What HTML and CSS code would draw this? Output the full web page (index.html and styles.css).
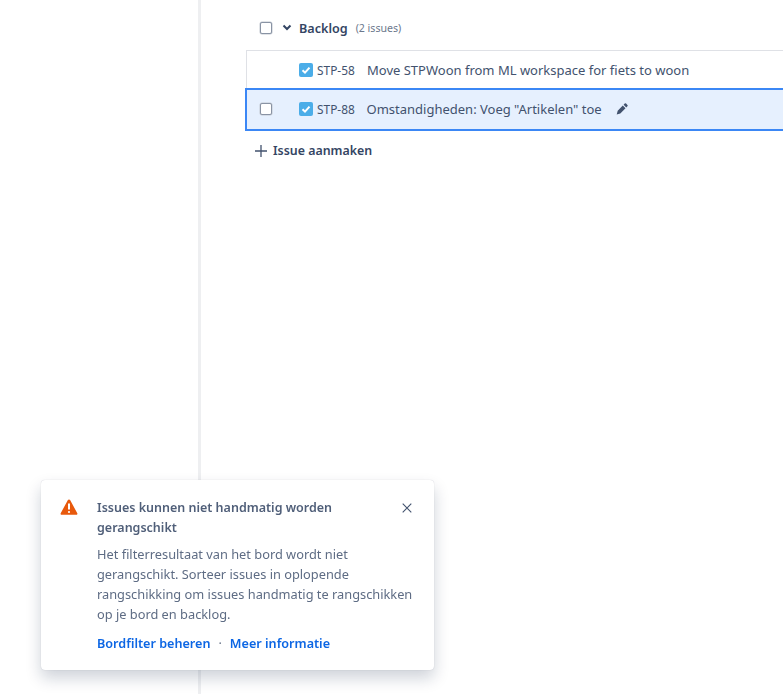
FILE: index.html
```html
<!DOCTYPE html>
<html lang="nl">
<head>
<meta charset="utf-8">
<title>Backlog</title>
<link rel="stylesheet" href="styles.css">
</head>
<body>
<div class="page">
  <aside class="side"></aside>
  <main class="main">
    <header class="head">
      <span class="check"></span>
      <svg class="chev" width="10" height="8" viewBox="0 0 10 8"><path d="M1.5 1.5 5 5l3.5-3.5" fill="none" stroke="#344563" stroke-width="2"/></svg>
      <span class="title">Backlog</span>
      <span class="count">(2 issues)</span>
    </header>
    <div class="list">
      <div class="row">
        <span class="slot"></span>
        <svg class="type" width="14" height="14" viewBox="0 0 14 14"><rect width="14" height="14" rx="2" fill="#4bade8"/><path d="M3.5 7.2 6 9.6l4.5-5" fill="none" stroke="#fff" stroke-width="2"/></svg>
        <span class="key">STP-58</span>
        <span class="summary">Move STPWoon from ML workspace for fiets to woon</span>
      </div>
      <div class="row selected">
        <span class="slot"><span class="check"></span></span>
        <svg class="type" width="14" height="14" viewBox="0 0 14 14"><rect width="14" height="14" rx="2" fill="#4bade8"/><path d="M3.5 7.2 6 9.6l4.5-5" fill="none" stroke="#fff" stroke-width="2"/></svg>
        <span class="key">STP-88</span>
        <span class="summary">Omstandigheden: Voeg "Artikelen" toe</span>
        <svg class="pencil" width="12" height="12" viewBox="0 0 12 12"><path d="M8.7.6a1 1 0 0 1 1.4 0l1.3 1.3a1 1 0 0 1 0 1.4l-1.1 1.1-2.7-2.7zM6.8 2.5l2.7 2.7-5.2 5.2-3.6 1 1-3.7z" fill="#42526e"/></svg>
      </div>
    </div>
    <div class="create">
      <svg width="14" height="14" viewBox="0 0 14 14"><path d="M7 1v12M1 7h12" stroke="#42526e" stroke-width="1.3"/></svg>
      <span>Issue aanmaken</span>
    </div>
  </main>
</div>
<section class="flag">
  <svg class="warn" width="18" height="16" viewBox="0 0 18 16"><path d="M7.9 1.1a1.2 1.2 0 0 1 2.2 0l7.2 13.1c.4.8 0 1.5-.9 1.5H1.6c-.9 0-1.3-.7-.9-1.5z" fill="#e8590c"/><path d="M9 4.5v6" stroke="#fff" stroke-width="2"/><circle cx="9" cy="13" r="1.1" fill="#fff"/></svg>
  <div class="flag-body">
    <h2 class="flag-title">Issues kunnen niet handmatig worden gerangschikt</h2>
    <p class="flag-text">Het filterresultaat van het bord wordt niet gerangschikt. Sorteer issues in oplopende rangschikking om issues handmatig te rangschikken op je bord en backlog.</p>
    <div class="flag-links"><a href="#">Bordfilter beheren</a><span class="dot">·</span><a href="#">Meer informatie</a></div>
  </div>
  <svg class="close" width="12" height="12" viewBox="0 0 12 12"><path d="M1.7 1.7l8.6 8.6M10.3 1.7l-8.6 8.6" stroke="#42526e" stroke-width="1.1"/></svg>
</section>
</body>
</html>
```
FILE: styles.css
```css
* { box-sizing: border-box; }
html, body { margin: 0; height: 100%; overflow: hidden; background: #fff; }
body { font-family: "Noto Sans", sans-serif; font-size: 13px; color: #42526e; }
.page { display: flex; height: 100%; }
.side { width: 201px; flex: none; border-right: 3px solid #eeeff1; }
.main { flex: 1; padding-left: 45px; min-width: 0; }
.head { height: 50px; padding: 6px 0 0 14px; display: flex; align-items: center; }
.check { display: block; width: 12px; height: 12px; border: 1px solid #8993a4; border-radius: 2px; background: #fff; box-shadow: 0 0 0 .5px #c1c7d0; }
.chev { margin-left: 10px; }
.title { margin-left: 7px; font-weight: 600; font-size: 12.6px; color: #344563; }
.count { margin-left: 8px; font-size: 10.6px; color: #6b778c; }
.list { border-top: 1px solid #dfe1e6; border-left: 1px solid #dfe1e6; }
.row { display: flex; align-items: center; height: 37px; white-space: nowrap; }
.slot { width: 52px; flex: none; padding-left: 13px; }
.type { flex: none; }
.key { margin-left: 4px; width: 50px; flex: none; font-size: 11.9px; color: #42526e; }
.summary { font-size: 13px; color: #42526e; }
.selected { height: 43px; margin-left: -2px; padding-bottom: 2px; background: #e6f0fe; border: 2px solid #3b87f5; border-right: 0; }
.selected .slot { padding-left: 13px; }
.selected .key { width: 49.5px; }
.pencil { margin-left: 14px; }
.create { display: flex; align-items: center; gap: 5px; height: 39px; padding-left: 8px; font-weight: 600; font-size: 12.4px; color: #344563; }
.flag { position: fixed; left: 41px; top: 480px; width: 393px; height: 190px; display: flex; padding: 18px 0 0 19px; background: #fff; border-radius: 4px; box-shadow: 0 8px 16px rgba(9, 30, 66, .2), 0 0 1px rgba(9, 30, 66, .25); }
.warn { flex: none; margin-top: 1px; }
.flag-body { width: 320px; margin-left: 19px; flex: none; }
.flag-title { margin: 0; padding-right: 60px; font-size: 12.5px; line-height: 20px; font-weight: 600; color: #505f79; }
.flag-text { margin: 6px 0 0; font-size: 12.8px; line-height: 20px; color: #5e6c84; }
.flag-links { margin-top: 10px; font-size: 12.6px; font-weight: 600; line-height: 20px; display: flex; }
.flag-links a { color: #0c66e4; text-decoration: none; }
.dot { margin: 0 8px; color: #6b778c; font-weight: 400; }
.close { flex: none; margin: 4px 0 0 -16px; }
```
